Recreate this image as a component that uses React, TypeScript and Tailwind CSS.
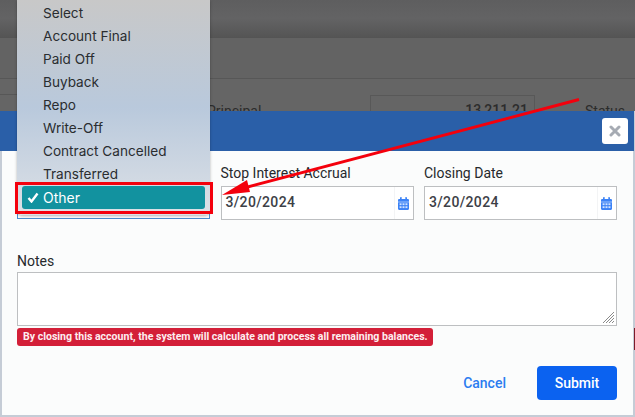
import React from "react";

const menuItems = ["Select", "Account Final", "Paid Off", "Buyback", "Repo", "Write-Off", "Contract Cancelled", "Transferred"];

function CalendarIcon() {
  return (
    <svg width="11" height="13" viewBox="0 0 12 14" className="block">
      <rect x="2.2" y="0" width="1.8" height="3" rx="0.5" fill="#3b82f6" />
      <rect x="8" y="0" width="1.8" height="3" rx="0.5" fill="#3b82f6" />
      <path d="M0 3.2a1.2 1.2 0 0 1 1.2-1.2h9.6A1.2 1.2 0 0 1 12 3.2V5H0z" fill="#3b82f6" />
      <path d="M0 5.6h12v7.2a1.2 1.2 0 0 1-1.2 1.2H1.2A1.2 1.2 0 0 1 0 12.8z" fill="#3b82f6" />
      <g fill="#cfe2ff">
        <rect x="1.7" y="6.8" width="2.2" height="2" />
        <rect x="4.9" y="6.8" width="2.2" height="2" />
        <rect x="8.1" y="6.8" width="2.2" height="2" />
        <rect x="1.7" y="10" width="2.2" height="2" />
        <rect x="4.9" y="10" width="2.2" height="2" />
        <rect x="8.1" y="10" width="2.2" height="2" />
      </g>
    </svg>
  );
}

function DateField({ label }: { label: string }) {
  return (
    <div className="flex flex-col">
      <div className="h-[26px] text-[14px] leading-[26px] text-[#26292c]">{label}</div>
      <div className="flex h-[34px] items-stretch border border-[#bdbfc1] bg-white">
        <div className="flex-1 pl-[4px] text-[14px] font-medium leading-[30px] tracking-[0.35px] text-[#3c4046]">3/20/2024</div>
        <div className="flex w-[19px] items-center justify-center border-l border-[#f3f4f5] pr-[1px]">
          <CalendarIcon />
        </div>
      </div>
    </div>
  );
}

export default function App() {
  return (
    <div className="relative h-[417px] w-[635px] overflow-hidden bg-[#656565] font-['Roboto',sans-serif]">
      {/* dimmed page behind */}
      <div className="h-[38px] border-b border-[#545454] bg-gradient-to-b from-[#5e5e5f] via-[#636364] to-[#555555]" />
      <div className="h-[41px] border-b border-[#575757] bg-[#636363]" />
      <div className="h-[16px] w-[200px] border-b border-[#575757]" />
      <div className="flex h-[17px] items-start">
        <div className="ml-[207px] w-[163px] pt-[8px] text-[14px] leading-[16px] text-[#2c2c2c]">Principal</div>
        <div className="h-[30px] w-[165px] border border-[#585858] pr-[6px] pt-[6px] text-right text-[14px] font-medium leading-[16px] text-[#2c2c2c]">13,211.21</div>
        <div className="ml-[50px] pt-[8px] text-[14px] leading-[16px] text-[#2c2c2c]">Status</div>
      </div>

      {/* modal */}
      <div className="absolute inset-x-0 bottom-0 top-[111px] bg-[#c5ccd6]">
        <div className="flex h-[40px] w-[634px] items-start justify-end bg-[#2a5fa8] pr-[6px] pt-[7px]">
          <div className="flex h-[26px] w-[26px] items-center justify-center rounded-[3px] bg-white">
            <svg width="12" height="12" viewBox="0 0 12 12">
              <path d="M2 2l8 8M10 2l-8 8" stroke="#a6abb3" strokeWidth="3" strokeLinecap="round" />
            </svg>
          </div>
        </div>
        <div className="ml-[2px] h-[264px] w-[631px] bg-[#fbfcfc] px-[15px]">
          <div className="grid grid-cols-[193px_193px_193px] gap-x-[10.5px] pt-[9px]">
            <div />
            <DateField label="Stop Interest Accrual" />
            <DateField label="Closing Date" />
          </div>
          <div className="mt-[31px] h-[21px] text-[14px] leading-[20px] text-[#26292c]">Notes</div>
          <div className="relative h-[54px] w-[600px] border border-[#bdbfc1] bg-white">
            <svg width="13" height="13" viewBox="0 0 13 13" className="absolute bottom-[1px] right-[1px]">
              <path d="M1 12L12 1M4 12l8-8M7 12l5-5M10 12l2-2" stroke="#8a8a8a" strokeWidth="1" />
            </svg>
          </div>
          <div className="mt-[2px] h-[18px] w-[416px] rounded-[3px] bg-[#d31f38] pl-[6px] text-[10.55px] font-bold leading-[18px] text-[#fdeef0]">
            By closing this account, the system will calculate and process all remaining balances.
          </div>
          <div className="mt-[20px] flex h-[34px] w-[600px] items-center justify-end">
            <span className="mr-[31px] text-[14px] font-medium text-[#2b7cf0]">Cancel</span>
            <div className="flex h-[34px] w-[80px] items-center justify-center rounded-[4px] bg-[#0b62f0] text-[14px] font-medium text-white">Submit</div>
          </div>
        </div>
        <div className="absolute right-0 top-[217px] h-[22px] w-[1px] bg-[#7d1a2a]" />
      </div>

      {/* native dropdown menu */}
      <div className="absolute left-[17px] top-[186px] h-[33px] w-[193px] border border-[#4a8cd0]" />
      <div className="absolute left-[17px] top-0 flex h-[215px] w-[193px] flex-col rounded-b-[5px] bg-gradient-to-b from-[#c8c8c8] via-[#b9c9dc] to-[#dde1e6] pt-[2px] font-['Inter',sans-serif] text-[13.6px] text-[#2a2d30] shadow-[0_1px_3px_rgba(0,0,0,0.3)]">
        {menuItems.map((m) => (
          <div key={m} className="h-[23px] pl-[26px] leading-[23px]">{m}</div>
        ))}
        <div className="mx-[5px] flex h-[23px] items-center rounded-[3px] bg-[#12929f] text-[14px] text-white">
          <svg width="12" height="11" viewBox="0 0 12 11" className="ml-[4.5px] mr-[4.5px]">
            <path d="M1.5 6l3 3.5L10.5 1.5" fill="none" stroke="white" strokeWidth="2.4" />
          </svg>
          <span>Other</span>
        </div>
      </div>

      {/* annotations */}
      <div className="absolute left-[15px] top-[182px] h-[32px] w-[198px] border-[3px] border-[#f4000c]" />
      <svg width="635" height="417" className="absolute left-0 top-0">
        <line x1="579" y1="99.5" x2="240" y2="189" stroke="#f4000c" strokeWidth="3" />
        <polygon points="222,195 247,180 250,192" fill="#f4000c" />
      </svg>
    </div>
  );
}
